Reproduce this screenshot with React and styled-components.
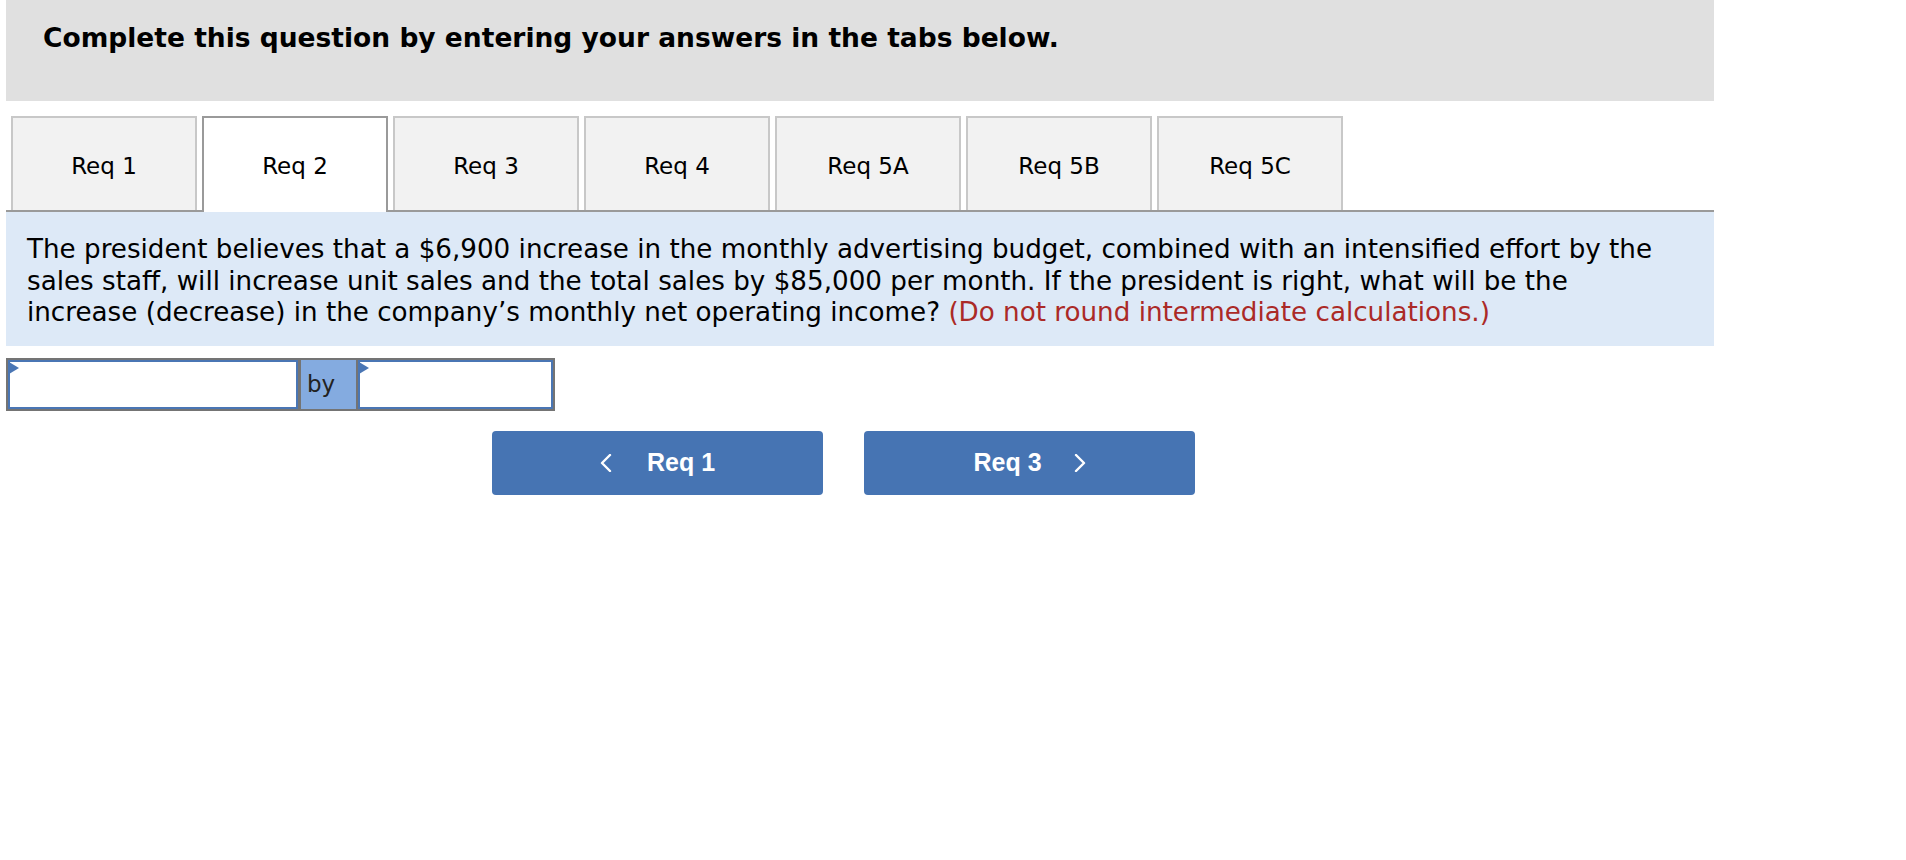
import React from "react";
import styled, { createGlobalStyle } from "styled-components";

const GlobalStyle = createGlobalStyle`
  body {
    margin: 0;
    background: #ffffff;
    font-family: "DejaVu Sans", Verdana, sans-serif;
    color: #000000;
  }
`;

const Page = styled.div`
  width: 1708px;
  margin-left: 6px;
`;

const Header = styled.div`
  box-sizing: border-box;
  height: 101px;
  padding: 22px 37px 0;
  background: #e0e0e0;
`;

const Heading = styled.h2`
  margin: 0;
  font-size: 26.5px;
  line-height: 31px;
  font-weight: bold;
`;

const TabBar = styled.div`
  display: flex;
  align-items: flex-end;
  margin-top: 15px;
  padding-left: 5px;
  border-bottom: 2px solid #9a9a9a;
`;

const Tab = styled.div`
  position: relative;
  z-index: ${(p) => (p.$active ? 1 : 0)};
  box-sizing: border-box;
  display: flex;
  align-items: center;
  justify-content: center;
  width: 186px;
  height: ${(p) => (p.$active ? "96px" : "94px")};
  margin-right: 5px;
  margin-bottom: ${(p) => (p.$active ? "-2px" : "0")};
  padding-top: 3px;
  padding-bottom: ${(p) => (p.$active ? "2px" : "0")};
  border: 2px solid ${(p) => (p.$active ? "#9a9a9a" : "#c8c8c8")};
  border-bottom: none;
  background: ${(p) => (p.$active ? "#ffffff" : "#f2f2f2")};
  font-size: 23px;
  cursor: pointer;
`;

const Question = styled.div`
  padding: 22px 46px 17px 21px;
  background: #dde9f7;
  font-size: 26.2px;
  line-height: 31.5px;
`;

const Note = styled.span`
  color: #ab2a27;
`;

const AnswerRow = styled.div`
  display: flex;
  width: fit-content;
  margin-top: 12px;
  border: 2px solid #747474;
  background: #747474;
`;

const Field = styled.div`
  position: relative;
  box-sizing: border-box;
  width: ${(p) => p.$width}px;
  height: 49px;
  margin-right: ${(p) => p.$gap || 0}px;
  border: 2px solid #4a76b4;
  background: #ffffff;

  &::before {
    content: "";
    position: absolute;
    top: 0;
    left: -1px;
    border-top: 6.5px solid transparent;
    border-bottom: 6.5px solid transparent;
    border-left: 10px solid #4a76b4;
  }
`;

const ByCell = styled.div`
  box-sizing: border-box;
  width: 55px;
  height: 49px;
  margin-right: 2px;
  padding: 8px 0 0 6px;
  background: #84abe0;
  color: #222222;
  font-size: 23px;
  line-height: 32px;
`;

const NavRow = styled.div`
  display: flex;
  gap: 41px;
  margin-top: 20px;
  padding-left: 486px;
`;

const NavButton = styled.button`
  display: flex;
  align-items: center;
  justify-content: center;
  gap: ${(p) => p.$gap}px;
  width: 331px;
  height: 64px;
  padding: 0;
  border: none;
  border-radius: 4px;
  background: #4674b3;
  color: #ffffff;
  font-family: "Liberation Sans", Arial, sans-serif;
  font-size: 25px;
  font-weight: bold;
  cursor: pointer;
`;

const Chevron = ({ dir }) => (
  <svg width="12" height="18" viewBox="0 0 12 18" fill="none">
    <polyline
      points={dir === "left" ? "10,1 2,9 10,17" : "2,1 10,9 2,17"}
      stroke="#ffffff"
      strokeWidth="2.4"
      strokeLinecap="round"
      strokeLinejoin="round"
    />
  </svg>
);

const tabs = ["Req 1", "Req 2", "Req 3", "Req 4", "Req 5A", "Req 5B", "Req 5C"];

export default function App() {
  return (
    <Page>
      <GlobalStyle />
      <Header>
        <Heading>Complete this question by entering your answers in the tabs below.</Heading>
      </Header>

      <TabBar>
        {tabs.map((t) => (
          <Tab key={t} $active={t === "Req 2"}>
            {t}
          </Tab>
        ))}
      </TabBar>

      <Question>
        The president believes that a $6,900 increase in the monthly advertising budget, combined with an intensified
        effort by the sales staff, will increase unit sales and the total sales by $85,000 per month. If the president is
        right, what will be the increase (decrease) in the company’s monthly net operating income?{" "}
        <Note>(Do not round intermediate calculations.)</Note>
      </Question>

      <AnswerRow>
        <Field $width={290} $gap={3} />
        <ByCell>by</ByCell>
        <Field $width={195} />
      </AnswerRow>

      <NavRow>
        <NavButton $gap={35}>
          <Chevron dir="left" />
          Req 1
        </NavButton>
        <NavButton $gap={32}>
          Req 3
          <Chevron dir="right" />
        </NavButton>
      </NavRow>
    </Page>
  );
}
